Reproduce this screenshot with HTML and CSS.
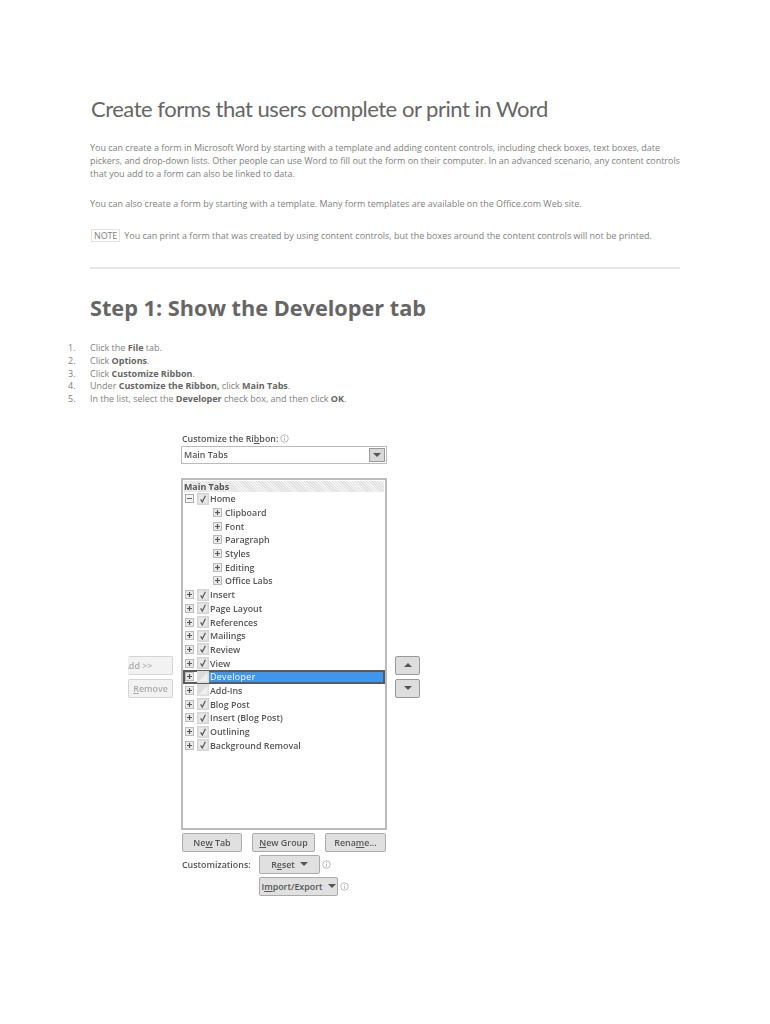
FILE: index.html
```html
<!DOCTYPE html>
<html lang="en">
<head>
<meta charset="utf-8">
<title>Create forms that users complete or print in Word</title>
<link rel="stylesheet" href="styles.css">
</head>
<body>
<svg class="defs" width="0" height="0" aria-hidden="true">
  <symbol id="plus" viewBox="0 0 9 9"><rect x=".5" y=".5" width="8" height="8" fill="#e9e9e9" stroke="#bbb"/><path d="M2 4.5h5M4.5 2v5" stroke="#555" stroke-width="1.2"/></symbol>
  <symbol id="minus" viewBox="0 0 9 9"><rect x=".5" y=".5" width="8" height="8" fill="#f4f4f4" stroke="#aaa"/><path d="M2 4.5h5" stroke="#666" stroke-width="1.1"/></symbol>
  <symbol id="check" viewBox="0 0 12 12"><rect width="12" height="12" fill="#d4d4d4"/><rect x="1.5" y="1.5" width="9" height="9" fill="#e8e8e8"/><path d="M3.6 6.4l1.7 2.6L8.4 2.8" fill="none" stroke="#555" stroke-width="1.2"/></symbol>
  <symbol id="empty" viewBox="0 0 12 12"><rect width="12" height="12" fill="#dcdcdc"/><path d="M1.5 10.5L10.5 1.5V10.5Z" fill="#efefef"/></symbol>
  <symbol id="info" viewBox="0 0 9 9"><circle cx="4.5" cy="4.5" r="3.8" fill="#fff" stroke="#bbb"/><path d="M4.5 3.8v3M4.5 2v1" stroke="#bbb"/></symbol>
</svg>
<main class="page">
  <h1 class="title">Create forms that users complete or print in Word</h1>
  <p class="para">You can create a form in Microsoft Word by starting with a template and adding content controls, including check boxes, text boxes, date pickers, and drop-down lists. Other people can use Word to fill out the form on their computer. In an advanced scenario, any content controls that you add to a form can also be linked to data.</p>
  <p class="para para-second">You can also create a form by starting with a template. Many form templates are available on the Office.com Web site.</p>
  <p class="para note"><span class="note-tag">NOTE</span>You can print a form that was created by using content controls, but the boxes around the content controls will not be printed.</p>
  <hr class="rule">
  <h2 class="step">Step 1: Show the Developer tab</h2>
  <ol class="steps">
    <li>Click the <b>File</b> tab.</li>
    <li>Click <b>Options</b>.</li>
    <li>Click <b>Customize Ribbon</b>.</li>
    <li>Under <b>Customize the Ribbon,</b> click <b>Main Tabs</b>.</li>
    <li>In the list, select the <b>Developer</b> check box, and then click <b>OK</b>.</li>
  </ol>
  <figure class="dialog">
    <div class="side side-left">
      <div class="btn side-btn add-btn"><span>Add &gt;&gt;</span></div>
      <div class="btn side-btn"><span><u>R</u>emove</span></div>
    </div>
    <div class="center">
      <div class="label"><span>Customize the Ri<u>b</u>bon:</span><svg class="info"><use href="#info"/></svg></div>
      <div class="select"><span>Main Tabs</span><div class="select-arrow"><i class="tri tri-down"></i></div></div>
      <div class="tree">
        <div class="tree-head">Main Tabs</div>
        <div class="row"><svg class="exp"><use href="#minus"/></svg><svg class="chk"><use href="#check"/></svg>Home</div>
        <div class="row sub"><svg class="exp"><use href="#plus"/></svg>Clipboard</div>
        <div class="row sub"><svg class="exp"><use href="#plus"/></svg>Font</div>
        <div class="row sub"><svg class="exp"><use href="#plus"/></svg>Paragraph</div>
        <div class="row sub"><svg class="exp"><use href="#plus"/></svg>Styles</div>
        <div class="row sub"><svg class="exp"><use href="#plus"/></svg>Editing</div>
        <div class="row sub"><svg class="exp"><use href="#plus"/></svg>Office Labs</div>
        <div class="row"><svg class="exp"><use href="#plus"/></svg><svg class="chk"><use href="#check"/></svg>Insert</div>
        <div class="row"><svg class="exp"><use href="#plus"/></svg><svg class="chk"><use href="#check"/></svg>Page Layout</div>
        <div class="row"><svg class="exp"><use href="#plus"/></svg><svg class="chk"><use href="#check"/></svg>References</div>
        <div class="row"><svg class="exp"><use href="#plus"/></svg><svg class="chk"><use href="#check"/></svg>Mailings</div>
        <div class="row"><svg class="exp"><use href="#plus"/></svg><svg class="chk"><use href="#check"/></svg>Review</div>
        <div class="row"><svg class="exp"><use href="#plus"/></svg><svg class="chk"><use href="#check"/></svg>View</div>
        <div class="row selected"><svg class="exp"><use href="#plus"/></svg><svg class="chk"><use href="#empty"/></svg><span class="sel-text">Developer</span></div>
        <div class="row"><svg class="exp"><use href="#plus"/></svg><svg class="chk"><use href="#empty"/></svg>Add-Ins</div>
        <div class="row"><svg class="exp"><use href="#plus"/></svg><svg class="chk"><use href="#check"/></svg>Blog Post</div>
        <div class="row"><svg class="exp"><use href="#plus"/></svg><svg class="chk"><use href="#check"/></svg>Insert (Blog Post)</div>
        <div class="row"><svg class="exp"><use href="#plus"/></svg><svg class="chk"><use href="#check"/></svg>Outlining</div>
        <div class="row"><svg class="exp"><use href="#plus"/></svg><svg class="chk"><use href="#check"/></svg>Background Removal</div>
      </div>
      <div class="tree-actions">
        <div class="btn act-tab"><span>Ne<u>w</u> Tab</span></div>
        <div class="btn act-group"><span><u>N</u>ew Group</span></div>
        <div class="btn act-rename"><span>Rena<u>m</u>e...</span></div>
      </div>
      <div class="custom">
        <div class="custom-label">Customizations:</div>
        <div class="custom-controls">
          <div class="custom-row"><div class="btn reset"><span>R<u>e</u>set</span><i class="tri tri-down tri-btn"></i></div><svg class="info"><use href="#info"/></svg></div>
          <div class="custom-row"><div class="btn import"><span>I<u>m</u>port/Export</span><i class="tri tri-down tri-btn"></i></div><svg class="info"><use href="#info"/></svg></div>
        </div>
      </div>
    </div>
    <div class="side side-right">
      <div class="btn side-btn move"><i class="tri tri-up"></i></div>
      <div class="btn side-btn move"><i class="tri tri-down"></i></div>
    </div>
  </figure>
</main>
</body>
</html>
```
FILE: styles.css
```css
* { box-sizing: border-box; }
html, body { margin: 0; background: #fff; }
body { font-family: "Open Sans", "Liberation Sans", sans-serif; color: #808080; }
.defs { position: absolute; }
.page { width: 770px; height: 1024px; overflow: hidden; padding: 94px 90px 0; }
.title { margin: 0 0 0 1px; font-family: Lato, "Open Sans", sans-serif; font-size: 22px; letter-spacing: -.48px; line-height: 30px; font-weight: 400; color: #666; }
.para { margin: 17px 0 0; font-size: 8.97px; line-height: 13px; color: #808080; }
.para-second { margin-top: 17px; }
.note { margin-top: 19px; display: flex; align-items: center; white-space: nowrap; }
.note-tag { border: 1px solid #e2e2e2; padding: 0 2px; margin: 0 4px 0 1px; line-height: 11px; letter-spacing: -.1px; }
.rule { margin: 25px 0 0; border: 0; height: 2px; background: #e6e6e6; }
.step { margin: 23px 0 0; font-size: 21.7px; line-height: 32px; font-weight: 700; color: #666; }
.steps { margin: 18px 0 0; padding: 0; list-style: none; counter-reset: n; font-size: 9px; line-height: 12.8px; }
.steps li { counter-increment: n; position: relative; }
.steps li::before { content: counter(n) "."; position: absolute; left: -22px; }
.steps b { font-weight: 700; color: #666; }

.dialog { margin: 25px 0 0 38px; display: flex; align-items: flex-start; gap: 8px; width: 292px; filter: blur(.35px); font-size: 8.9px; font-weight: 600; color: #555; }
.side { display: flex; flex-direction: column; gap: 4px; padding-top: 225px; }
.side-left { width: 45px; }
.side-right { width: 25px; }
.btn { display: flex; align-items: center; justify-content: center; border: 1px solid #aaa; border-radius: 2px; background: #e0e0e0; white-space: nowrap; height: 19px; }
.btn u { text-decoration-thickness: 1px; }
.side-btn { height: 19px; border-color: #d4d4d4; background: #f2f2f2; color: #aaa; overflow: hidden; }
.add-btn { justify-content: flex-start; border-left: 0; }
.add-btn span { margin-left: -5px; }
.move { border-color: #999; background: #ddd; }
.center { width: 206px; }
.label { height: 15px; line-height: 15px; display: flex; align-items: center; padding-left: 1px; white-space: nowrap; }
.info { width: 9px; height: 9px; margin-left: 2px; flex: none; }
.select { height: 18px; border: 1px solid #bbb; display: flex; align-items: center; justify-content: space-between; padding: 0 1px 0 2px; }
.select-arrow { width: 16px; height: 14px; background: #d8d8d8; border: 1px solid #999; display: flex; align-items: center; justify-content: center; }
.tri { display: block; width: 0; height: 0; border-left: 4px solid transparent; border-right: 4px solid transparent; }
.tri-down { border-top: 4px solid #555; }
.tri-up { border-bottom: 4px solid #555; }
.tri-btn { margin-left: 5px; }
.tree { height: 352px; margin-top: 14px; border: 2px solid #bbb; padding: 1px 1px 0; }
.tree-head { height: 11px; line-height: 11px; font-weight: 700; background: repeating-linear-gradient(45deg, #e0e0e0 0 1px, #f4f4f4 1px 2px); }
.row { display: flex; align-items: center; height: 13.7px; padding-left: 1px; white-space: nowrap; }
.sub { padding-left: 29px; }
.exp { width: 9px; height: 9px; flex: none; margin-right: 3px; }
.chk { width: 12px; height: 12px; flex: none; margin-right: 1px; }
.selected { margin: 0 -1px; padding-left: 0; border: 2px solid #5a5a5a; background: linear-gradient(#fff, #fff) left / 24px 100% no-repeat, #3f96ee; }
.sel-text { color: #fff; letter-spacing: .35px; font-weight: 400; }
.tree-actions { display: flex; justify-content: space-between; padding: 3px 1px 0; }
.act-tab { width: 60px; }
.act-group { width: 63px; }
.act-rename { width: 61px; }
.custom { display: flex; margin-top: 3px; }
.custom-label { width: 78px; padding: 3px 0 0 1px; }
.custom-controls { display: flex; flex-direction: column; gap: 3px; }
.custom-row { display: flex; align-items: center; }
.reset { width: 61px; }
.import { width: 79px; }
```
